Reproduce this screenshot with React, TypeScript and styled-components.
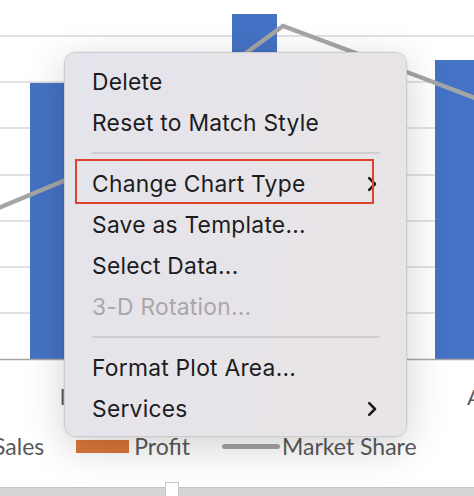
import React from "react";
import styled, { createGlobalStyle } from "styled-components";

const GlobalStyle = createGlobalStyle`
  html, body {
    margin: 0;
    padding: 0;
    background: #ffffff;
  }
  body {
    font-family: "Inter", "Noto Sans", sans-serif;
  }
`;

type Item = {
  label: string;
  disabled?: boolean;
  submenu?: boolean;
  marked?: boolean;
};

const groups: Item[][] = [
  [{ label: "Delete" }, { label: "Reset to Match Style" }],
  [
    { label: "Change Chart Type", submenu: true, marked: true },
    { label: "Save as Template..." },
    { label: "Select Data..." },
    { label: "3-D Rotation...", disabled: true },
  ],
  [{ label: "Format Plot Area..." }, { label: "Services", submenu: true }],
];

const gridLines = [36, 82, 128, 175, 221, 267, 313];

const Chevron: React.FC = () => (
  <ChevronSvg viewBox="0 0 10 16" width="10" height="16">
    <path
      d="M2.2 2.2 L8 8 L2.2 13.8"
      fill="none"
      stroke="#1c1c1e"
      strokeWidth="2.6"
      strokeLinecap="round"
      strokeLinejoin="round"
    />
  </ChevronSvg>
);

export default function App() {
  return (
    <Page>
      <GlobalStyle />
      <ChartSvg width="474" height="372" viewBox="0 0 474 372">
        {gridLines.map((y) => (
          <line key={y} x1="0" x2="474" y1={y} y2={y} stroke="#d9d9d9" strokeWidth="1.5" />
        ))}
        <rect x="30" y="83" width="46" height="276" fill="#4472c4" />
        <rect x="232" y="14" width="45" height="345" fill="#4472c4" />
        <rect x="435" y="60" width="45" height="299" fill="#4472c4" />
        <line x1="0" x2="474" y1="359.5" y2="359.5" stroke="#a6a6a6" strokeWidth="1.5" />
        <polyline
          points="-4,209 80,174 283,26 420,77 480,100"
          fill="none"
          stroke="#a5a5a5"
          strokeWidth="4.5"
          strokeLinejoin="miter"
        />
        <AxisText x="60" y="405">l</AxisText>
        <AxisText x="467" y="405">A</AxisText>
      </ChartSvg>

      <Legend>
        <LegendLabel>Sales</LegendLabel>
        <LegendEntry>
          <Swatch />
          <LegendLabel>Profit</LegendLabel>
        </LegendEntry>
        <LegendEntry>
          <LineKey />
          <LegendLabel>Market Share</LegendLabel>
        </LegendEntry>
      </Legend>

      <Footer>
        <Handle />
      </Footer>

      <Menu>
        {groups.map((group, gi) => (
          <React.Fragment key={gi}>
            {gi > 0 && <Separator />}
            {group.map((item) => (
              <Row key={item.label} $disabled={item.disabled} $marked={item.marked}>
                <span>{item.label}</span>
                {item.submenu && <Chevron />}
              </Row>
            ))}
          </React.Fragment>
        ))}
      </Menu>
    </Page>
  );
}

const Page = styled.div`
  position: relative;
  width: 474px;
  height: 496px;
  overflow: hidden;
  background: #ffffff;
  display: flex;
  flex-direction: column;
`;

const ChartSvg = styled.svg`
  display: block;
  flex: none;
  overflow: visible;
`;

const AxisText = styled.text`
  font-family: "Lato", "Open Sans", sans-serif;
  font-size: 22px;
  fill: #595959;
`;

const Legend = styled.div`
  display: flex;
  align-items: center;
  gap: 32px;
  margin-left: -7px;
  height: 40px;
  margin-top: 54px;
`;

const LegendEntry = styled.div`
  display: flex;
  align-items: center;
  gap: 5px;
`;

const LegendLabel = styled.span`
  font-family: "Lato", "Open Sans", sans-serif;
  font-size: 23px;
  color: #595959;
  white-space: nowrap;
`;

const Swatch = styled.span`
  width: 53px;
  height: 13px;
  background: #d9773a;
`;

const LineKey = styled.span`
  width: 58px;
  height: 5px;
  border-radius: 3px;
  background: #a5a5a5;
  margin-right: -3px;
`;

const Footer = styled.div`
  position: relative;
  margin-top: auto;
  height: 8px;
  border-top: 1.5px solid #c6c6c6;
  background: #d6d6d6;
`;

const Handle = styled.span`
  position: absolute;
  left: 165px;
  top: -6px;
  width: 12px;
  height: 14px;
  background: #ffffff;
  border: 1px solid #c6c6c6;
  border-bottom: none;
`;

const Menu = styled.div`
  position: absolute;
  left: 64px;
  top: 52px;
  width: 343px;
  height: 385px;
  box-sizing: border-box;
  padding: 8px 0 7px;
  border-radius: 11px;
  background: linear-gradient(100deg, #e4e4ec 0%, #e7e4e9 45%, #e8e4e7 100%);
  border: 1px solid #cfccd0;
  box-shadow: 0 10px 40px rgba(0, 0, 0, 0.18), 0 0 2px rgba(0, 0, 0, 0.12);
  display: flex;
  flex-direction: column;
`;

const Row = styled.div<{ $disabled?: boolean; $marked?: boolean }>`
  position: relative;
  height: 41px;
  display: flex;
  align-items: center;
  justify-content: space-between;
  padding: 0 29px 0 27px;
  font-size: 22.8px;
  letter-spacing: 0.25px;
  color: ${({ $disabled }) => ($disabled ? "#a9a7aa" : "#1c1c1e")};

  &::after {
    content: "";
    display: ${({ $marked }) => ($marked ? "block" : "none")};
    position: absolute;
    left: 10px;
    right: 32px;
    top: -4px;
    bottom: 0;
    border: 2px solid #e0432c;
  }
`;

const ChevronSvg = styled.svg`
  display: block;
  flex: none;
`;

const Separator = styled.div`
  height: 1.5px;
  margin: 9px 26px 9.5px 27px;
  background: #d0cdd0;
`;
